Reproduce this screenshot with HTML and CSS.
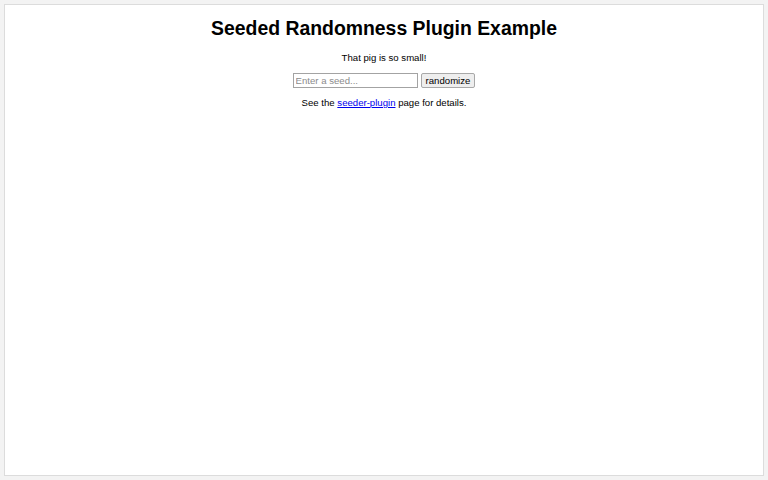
FILE: index.html
```html
<!DOCTYPE html>
<html>
<head>
<meta charset="utf-8">
<title>Seeded Randomness Plugin Example</title>
<link rel="stylesheet" href="styles.css">
</head>
<body>
<div class="frame">
  <h1 class="title">Seeded Randomness Plugin Example</h1>
  <p class="message">That pig is so small!</p>
  <div class="controls">
    <input class="seed" type="text" placeholder="Enter a seed...">
    <button class="go" type="button">randomize</button>
  </div>
  <p class="note">See the <a href="#">seeder-plugin</a> page for details.</p>
</div>
</body>
</html>
```
FILE: styles.css
```css
html, body {
  margin: 0;
  height: 100%;
}
body {
  background: #f3f3f3;
  padding: 4px;
  box-sizing: border-box;
  font-family: "Liberation Sans", Arial, sans-serif;
}
.frame {
  height: 100%;
  box-sizing: border-box;
  background: #fff;
  border: 1px solid #dcdcdc;
  text-align: center;
  padding-top: 12px;
}
.title {
  margin: 0;
  font-size: 19.4px;
  font-weight: bold;
  line-height: 23px;
  color: #000;
}
.message {
  margin: 12px 0 0;
  font-size: 9.6px;
  line-height: 12px;
}
.controls {
  margin-top: 9px;
  display: flex;
  justify-content: center;
  gap: 3px;
}
.seed {
  width: 125px;
  height: 15px;
  box-sizing: border-box;
  margin: 0;
  padding: 0 2px;
  border: 1px solid #a3a3a3;
  font: 9.6px "Liberation Sans", Arial, sans-serif;
}
.seed::placeholder {
  color: #8c8c8c;
}
.go {
  height: 15px;
  box-sizing: border-box;
  margin: 0;
  padding: 0 4px;
  border: 1px solid #a8a8a8;
  border-radius: 2px;
  background: #eeeeee;
  font: 9.6px "Liberation Sans", Arial, sans-serif;
  color: #000;
}
.note {
  margin: 9px 0 0;
  font-size: 9.6px;
  line-height: 12px;
}
.note a {
  color: #0000ee;
}
```
